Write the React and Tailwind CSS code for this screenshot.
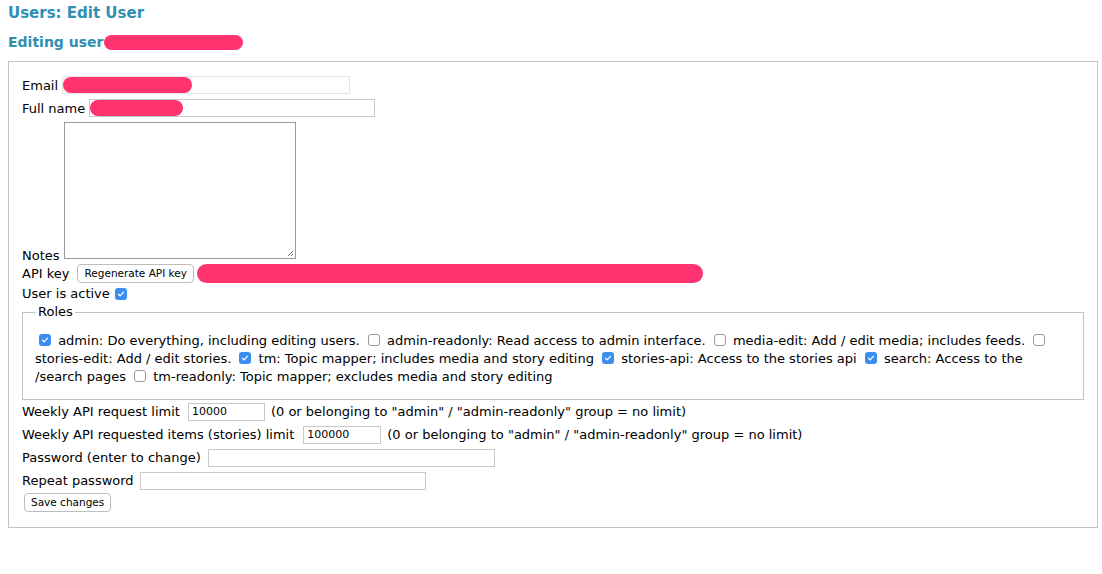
import React from 'react';

const Pill = ({ w, h = 16, className = '' }) => (
  <span className={`inline-block rounded-full bg-[#ff3370] ${className}`} style={{ width: w, height: h }} />
);

const Box = ({ checked, className = '' }) =>
  checked ? (
    <span className={`relative inline-block h-[12px] w-[12px] rounded-[3px] bg-[#3b8ef0] align-[-1px] ${className}`}>
      <svg viewBox="0 0 12 12" className="absolute left-[1px] top-[1px] h-[10px] w-[10px]">
        <path d="M3 6.3 L5 8.3 L9 3.8" fill="none" stroke="white" strokeWidth="1.5" strokeLinecap="round" strokeLinejoin="round" />
      </svg>
    </span>
  ) : (
    <span className={`inline-block h-[12px] w-[12px] rounded-[3px] border border-[#9a9a9a] bg-white align-[-1px] ${className}`} />
  );

const roles = [
  [true, 'admin: Do everything, including editing users.'],
  [false, 'admin-readonly: Read access to admin interface.'],
  [false, 'media-edit: Add / edit media; includes feeds.'],
  [false, 'stories-edit: Add / edit stories.'],
  [true, 'tm: Topic mapper; includes media and story editing'],
  [true, 'stories-api: Access to the stories api'],
  [true, 'search: Access to the /search pages'],
  [false, 'tm-readonly: Topic mapper; excludes media and story editing'],
];

const inputCls = 'border border-[#c8c8c8] bg-white h-[18px] px-[3px] text-[11px] leading-[16px] text-black';

export default function App() {
  return (
    <div className="min-h-screen bg-white pl-[8px] pr-[4px] pt-[2px] text-[13px] text-black" style={{ fontFamily: '"DejaVu Sans", Verdana, sans-serif' }}>
      <h1 className="h-[22px] text-[15px] font-bold leading-[22px] text-[#2e8fb3]">Users: Edit User</h1>
      <h2 className="mt-[7px] flex h-[22px] items-center text-[14px] font-bold text-[#2e8fb3]">
        Editing user<Pill w={139} h={15} className="ml-[1px]" />
      </h2>
      <div className="mt-[8px] border border-[#c4c4c4] px-[13px] pb-[15px] pt-[14px]">
        <div className="flex h-[23px] items-start">
          <span className="mr-[4px] pt-[1px] leading-[18px]">Email</span>
          <div className="relative h-[18px] w-[288px] border border-[#e2e2e2]">
            <Pill w={129} className="absolute left-0 top-0" />
          </div>
        </div>
        <div className="flex h-[23px] items-start">
          <span className="mr-[4px] pt-[1px] leading-[18px]">Full name</span>
          <div className="relative h-[18px] w-[286px] border border-[#c8c8c8]">
            <Pill w={93} className="absolute left-0 top-0" />
          </div>
        </div>
        <div className="flex h-[141px] items-end">
          <span className="mr-[4px] leading-[15px]">Notes</span>
          <div className="relative mb-[4px] h-[137px] w-[232px] border border-[#9a9a9a]">
            <svg viewBox="0 0 8 8" className="absolute bottom-[1px] right-[1px] h-[8px] w-[8px]">
              <path d="M7 2 L2 7 M7 5 L5 7" stroke="#777" strokeWidth="1" />
            </svg>
          </div>
        </div>
        <div className="flex h-[21px] items-center">
          <span className="mr-[8px]">API key</span>
          <button className="h-[19px] rounded-[4px] border border-[#bdbdbd] bg-white px-[6px] text-[10.5px] leading-[17px]">Regenerate API key</button>
          <Pill w={506} h={19} className="ml-[3px]" />
        </div>
        <div className="flex h-[20px] items-center">
          <span className="mr-[5px]">User is active</span>
          <Box checked />
        </div>
        <fieldset className="mt-[1px] border border-[#c4c4c4] pb-[13px] pl-[12px] pr-[12px] pt-[13px] leading-[18px]">
          <legend className="ml-[1px] px-[2px] leading-[14px]">Roles</legend>
          {roles.map(([c, t], i) => (
            <span key={i}>
              {i === 0 ? null : ' '}
              <Box checked={c} className="ml-[4px] mr-[3px]" /> {t}
            </span>
          ))}
        </fieldset>
        <div className="flex h-[23px] items-center">
          <span className="mr-[8px]">Weekly API request limit</span>
          <div className={`${inputCls} w-[77px]`}>10000</div>
          <span className="ml-[6px]">(0 or belonging to "admin" / "admin-readonly" group = no limit)</span>
        </div>
        <div className="flex h-[23px] items-center">
          <span className="mr-[9px]">Weekly API requested items (stories) limit</span>
          <div className={`${inputCls} w-[78px]`}>100000</div>
          <span className="ml-[6px]">(0 or belonging to "admin" / "admin-readonly" group = no limit)</span>
        </div>
        <div className="flex h-[23px] items-center">
          <span className="mr-[7px]">Password (enter to change)</span>
          <div className={`${inputCls} w-[287px]`} />
        </div>
        <div className="flex h-[23px] items-center">
          <span className="mr-[6px]">Repeat password</span>
          <div className={`${inputCls} w-[286px]`} />
        </div>
        <button className="ml-[2px] h-[19px] rounded-[4px] border border-[#bdbdbd] bg-white px-[6px] text-[10.5px] leading-[17px]">Save changes</button>
      </div>
    </div>
  );
}
